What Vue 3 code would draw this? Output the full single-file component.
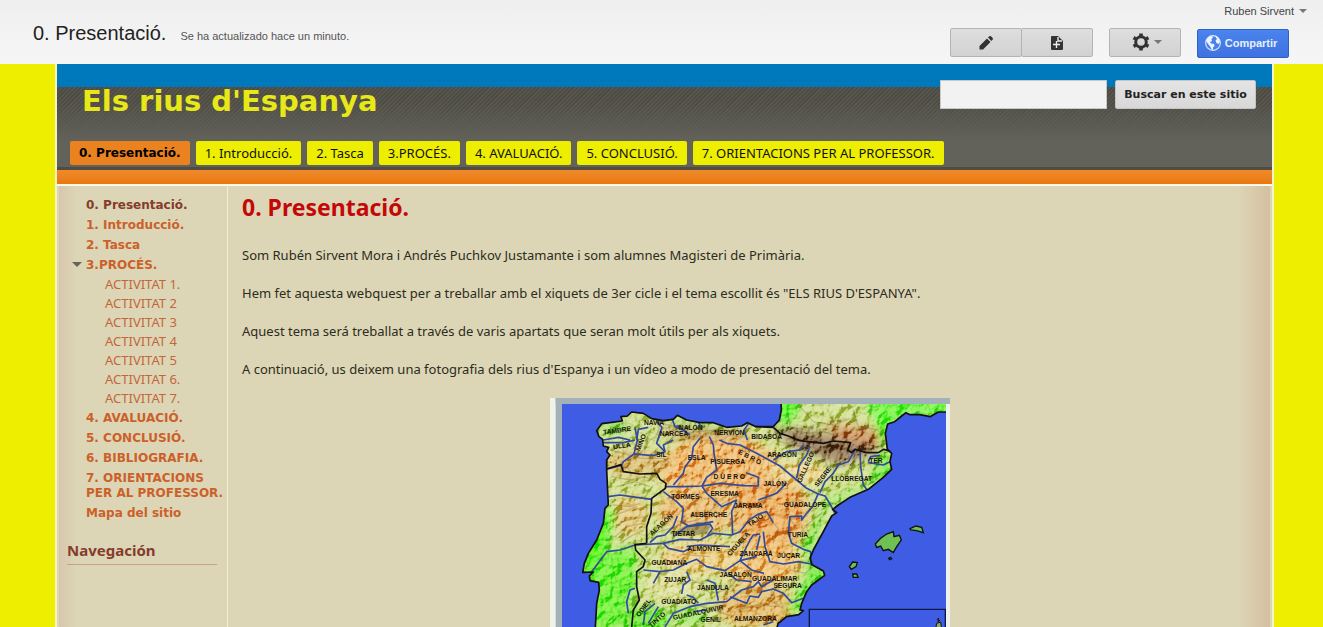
<script setup>
const tabs = [
  '0. Presentació.',
  '1. Introducció.',
  '2. Tasca',
  '3.PROCÉS.',
  '4. AVALUACIÓ.',
  '5. CONCLUSIÓ.',
  '7. ORIENTACIONS PER AL PROFESSOR.',
]

const pages = [
  { name: '0. Presentació.', current: true },
  { name: '1. Introducció.' },
  { name: '2. Tasca' },
  {
    name: '3.PROCÉS.',
    children: [
      'ACTIVITAT 1.',
      'ACTIVITAT 2',
      'ACTIVITAT 3',
      'ACTIVITAT 4',
      'ACTIVITAT 5',
      'ACTIVITAT 6.',
      'ACTIVITAT 7.',
    ],
  },
  { name: '4. AVALUACIÓ.' },
  { name: '5. CONCLUSIÓ.' },
  { name: '6. BIBLIOGRAFIA.' },
  { name: '7. ORIENTACIONS PER AL PROFESSOR.' },
  { name: 'Mapa del sitio' },
]

const paragraphs = [
  'Som Rubén Sirvent Mora i Andrés Puchkov Justamante i som alumnes Magisteri de Primària.',
  'Hem fet aquesta webquest per a treballar amb el xiquets de 3er cicle i el tema escollit és "ELS RIUS D\'ESPANYA".',
  'Aquest tema será treballat a través de varis apartats que seran molt útils per als xiquets.',
  "A continuació, us deixem una fotografia dels rius d'Espanya i un vídeo a modo de presentació del tema.",
]

const land =
  'M170 122L185 101L215 97L247 93L243 80L262 78L275 66L310 70L335 86L370 92L400 88L412 76L440 90L480 98L520 98L560 112L605 108L622 98L645 109L700 110L718 90L724 60L722 20H1240V66L1195 66L1170 80L1140 74L1110 74L1098 68L1085 78L1064 95L1043 102L1036 130L1042 178L1055 190L1050 215L1055 238L1030 262L985 298L930 322L895 345L878 358L890 368L875 378L850 425L820 480L810 505L816 524L850 543L854 556L815 585L800 605L785 640L780 660L790 662L776 674L740 680L715 700L705 730H165L170 640L178 600L176 577L150 572L148 558L160 546L128 547L133 520L145 490L170 450L190 400L195 355L205 345L200 240L200 210L210 195L200 185L206 172L190 168L188 148L177 140Z'

const rivers = [
  'M285 112L292 150L282 192L250 215L245 226L200 237',
  'M282 192L340 197L375 185L350 160L366 112L350 95',
  'M190 150L235 142L270 150M190 158L250 158L285 150',
  'M325 112L295 118L290 150M400 150L370 165L375 185',
  'M395 84L405 110L440 125M412 108L450 135M475 98L485 110',
  'M480 145L460 170L455 205L435 230L430 250L400 285',
  'M508 140L520 165L522 190L530 240L500 262L486 288',
  'M378 290L430 290L486 288L540 280L610 287L655 288L655 262L618 248',
  'M370 305L410 335L430 355L425 395L445 408L520 395',
  'M486 288L500 310L545 350L590 330L575 365L578 432',
  'M538 150L560 160L600 165L650 190L720 228L770 270L800 295L830 310L855 318L870 342L885 370',
  'M625 102L612 120L622 150',
  'M655 330L710 310L740 278M700 210L740 185L780 180L790 165',
  'M810 168L800 195L778 225L770 265',
  'M840 308L855 275L880 250L895 225L925 215L945 180',
  'M960 180L962 230L970 285L980 298M985 215L992 200L1020 196M985 218L1030 225L1050 215',
  'M835 310L818 350L800 370L785 390L785 378L750 380L745 430L755 460L790 478L812 485L814 520',
  'M700 398L680 365L655 372L625 392L600 425L575 435L520 430L480 450L420 448L370 460L285 465L240 480L200 485L155 545',
  'M330 458L350 440L375 435L400 410L412 378M370 460L385 475L430 485L450 475',
  'M400 440L440 410L510 402L518 415L500 440M440 470L480 465L570 470',
  'M660 432L640 435L630 450L605 500L600 512L635 540L672 550M660 437L650 480',
  'M670 425L675 470L690 515L730 522L775 515L814 522',
  'M310 540L360 545L400 540L440 520L470 508L500 530L555 542L600 512L650 500',
  'M360 545L340 580M440 545L450 570L430 585L425 612',
  'M375 711L400 670L450 650L500 640L560 635L605 600L640 590L655 575L665 590L700 570',
  'M500 570L525 580L535 632M440 615L460 622L475 640M565 550L590 570L635 575',
  'M570 620L620 640L630 618L655 622L665 605L700 597L730 610L755 638L790 625',
  'M310 705L315 665L345 640M325 700L355 650M460 665L500 660M670 705L700 695',
  'M205 320L240 315L290 322L335 328',
  'M265 670L260 635L270 600L285 595',
]

const border =
  'M200 237L243 224L250 245L300 252L350 250L360 268L378 280L376 295L335 325L333 370L320 410L320 460M320 460L285 464L287 480L315 510L310 530L290 545V590L298 630L280 660L275 711'
const pyrenees =
  'M645 110L700 112L720 130L745 138L780 152L850 160L880 153L932 158L923 180L935 188L945 178L980 188L1015 188L1030 178L1048 182'

const ridges = [
  'M210 180L250 190L300 205L370 205L390 220M290 200L315 175L330 150L350 140',
  'M215 260L270 270L315 260L345 275M230 290L285 275L330 290M220 345L270 350L300 340',
  'M220 375L255 365L290 350M230 405L260 390L315 380M225 440L260 410L310 400M240 460L270 440L310 420',
  'M340 80L380 105L430 110L470 125L530 120L600 125M360 105L350 135L395 130',
  'M340 430L390 415L430 398L475 390L520 355L570 330L600 310',
  'M650 340L685 325L720 300L740 295M730 340L780 330L810 350M690 390L715 415L700 460',
  'M745 340L735 365L770 415L735 425M780 430L800 405L850 365M750 540L795 550L820 530',
  'M680 125L720 155L760 165L830 175L890 180M790 190L780 225M845 190L860 225M895 185L880 240',
  'M745 70L750 110L800 130L850 125L900 140M780 50L820 95L880 105L930 85M940 60L955 110L1015 120',
  'M360 500L400 520L450 495L510 500M430 560L480 580L510 610L560 600L610 550',
  'M430 630L520 660L580 680M590 660L650 645L720 650M710 590L690 630L730 655',
]

const labels = [
  ['TAMBRE', 232, 128, -8], ['NAVIA', 342, 106, 0], ['NALÓN', 452, 120, 0],
  ['NARCEA', 402, 138, 0], ['ULLA', 247, 174, -8], ['MIÑO', 309, 160, -68],
  ['SIL', 364, 201, 0], ['NERVIÓN', 568, 135, 0], ['BIDASOA', 680, 148, 0],
  ['ESLA', 470, 210, 0], ['PISUERGA', 563, 221, 0], ['EBRO', 627, 207, 28, 'open'],
  ['DUERO', 568, 266, 0, 'open'], ['ERESMA', 554, 317, 0], ['TORMES', 436, 328, 0],
  ['JARAMA', 625, 354, 0], ['ALBERCHE', 506, 380, 0], ['ALAGÓN', 368, 409, -42],
  ['TIETAR', 430, 438, 0], ['TAJO', 650, 396, -35], ['CIGÜELA', 600, 466, -48],
  ['ALMONTE', 492, 482, 0], ['ZANCARA', 648, 498, 0], ['GUADIANA', 388, 525, 0],
  ['ZUJAR', 406, 575, 0], ['JABALÓN', 587, 561, 0], ['JÁNDULA', 519, 599, 0],
  ['GUADIATO', 416, 641, 0], ['GUADALQUIVIR', 476, 674, -12], ['GENIL', 512, 696, 0],
  ['ODIEL', 316, 657, -54], ['TINTO', 356, 694, -42], ['ALMANZORA', 646, 694, 0],
  ['ARAGÓN', 726, 201, 0], ['GALLEGO', 803, 235, -66], ['SEGRE', 854, 264, -52],
  ['TER', 1008, 218, 0], ['LLOBREGAT', 935, 274, 0], ['JALÓN', 704, 289, 0],
  ['GUADALOPE', 795, 352, 0], ['TURIA', 774, 442, 0], ['JUCAR', 746, 505, 0],
  ['GUADALIMAR', 704, 574, 0], ['SEGURA', 743, 595, 0],
]
</script>

<template>
  <div class="page">
    <header class="topbar">
      <div class="heading">
        <span class="doc">0. Presentació.</span>
        <span class="status">Se ha actualizado hace un minuto.</span>
      </div>
      <div class="tools">
        <button class="user" type="button">Ruben Sirvent <i class="caret"></i></button>
        <div class="actions">
          <div class="pair">
            <button class="tool" type="button" aria-label="Editar página">
              <svg width="16" height="16" viewBox="0 0 16 16"><path d="M1.500 11L9 3.500L12.500 7L5 14.500H1.500ZM10 2.600L11.300 1.300Q12.200 .6 13 1.300L14.700 3Q15.300 3.800 14.700 4.600L13.400 6Z" fill="#333" /></svg>
            </button>
            <button class="tool" type="button" aria-label="Nueva página">
              <svg width="16" height="16" viewBox="0 0 16 16"><path d="M2 2Q2 1 3 1H9L14 6V14Q14 15 13 15H3Q2 15 2 14Z" fill="#333" /><path d="M9 2V6H13M7.500 6V13M4 9.500H11" stroke="#eee" stroke-width="1.400" fill="none" /></svg>
            </button>
          </div>
          <button class="tool gear" type="button" aria-label="Más acciones">
            <svg width="18" height="18" viewBox="0 0 18 18">
              <circle cx="9" cy="9" r="5.300" fill="none" stroke="#333" stroke-width="3" />
              <path d="M7.200 .5H10.800V4H7.200ZM7.200 14H10.800V17.500H7.200ZM.7 6.200L2.500 3L5 5L3.500 7.600ZM17.300 6.200L15.500 3L13 5L14.500 7.600ZM.7 11.800L2.500 15L5 13L3.500 10.400ZM17.300 11.800L15.500 15L13 13L14.500 10.400Z" fill="#333" />
            </svg>
            <i class="caret"></i>
          </button>
          <button class="share" type="button">
            <svg width="16" height="16" viewBox="0 0 16 16">
              <circle cx="8" cy="8" r="7.400" fill="#4a80e8" stroke="#dfe9ff" stroke-width="1.100" />
              <path d="M1 6Q2.500 1.500 7 1L8 2.500L6.500 4L7 6L5 7L6 8.500L9 9L9.500 11L8 12.500L8 15Q6 14.500 5.500 12L3.500 9.500ZM10 1Q14 2 15 7L13.500 9L11.500 8L10.500 5.500L12 4Z" fill="#edf3ff" />
            </svg>
            Compartir
          </button>
        </div>
      </div>
    </header>

    <div class="site">
      <div class="banner">
        <div class="masthead">
          <h1><a href="#">Els rius d'Espanya</a></h1>
          <form class="search" @submit.prevent>
            <input type="text" aria-label="Buscar en este sitio" />
            <button type="submit">Buscar en este sitio</button>
          </form>
        </div>
        <nav class="tabs">
          <a v-for="(tab, i) in tabs" :key="tab" href="#" :class="{ active: i === 0 }">{{ tab }}</a>
        </nav>
      </div>
      <div class="stripe"></div>

      <div class="body">
        <aside>
          <ul class="tree">
            <li v-for="p in pages" :key="p.name">
              <i v-if="p.children" class="twisty"></i>
              <a href="#" class="node" :class="{ current: p.current }">{{ p.name }}</a>
              <ul v-if="p.children" class="sub">
                <li v-for="c in p.children" :key="c"><a href="#">{{ c }}</a></li>
              </ul>
            </li>
          </ul>
          <h2>Navegación</h2>
        </aside>

        <main>
          <h2 class="title">0. Presentació.</h2>
          <p v-for="t in paragraphs" :key="t">{{ t }}</p>
          <svg class="map" viewBox="30 24 1200 687" role="img" aria-label="Rius d'Espanya">
            <defs>
              <clipPath id="land"><path :d="land" /></clipPath>
              <clipPath id="sheet"><rect x="66" y="42" width="1152" height="669" /></clipPath>
              <filter id="soft" x="-20%" y="-20%" width="140%" height="140%"><feGaussianBlur stdDeviation="14" /></filter>
              <filter id="relief" x="0" y="0" width="100%" height="100%">
                <feTurbulence type="fractalNoise" baseFrequency="0.035" numOctaves="4" seed="7" />
                <feDiffuseLighting surfaceScale="24" lighting-color="#fff">
                  <feDistantLight azimuth="225" elevation="42" />
                </feDiffuseLighting>
              </filter>
            </defs>
            <rect x="30" y="24" width="1200" height="687" fill="#f1f1ec" />
            <rect x="47" y="24" width="1183" height="18" fill="#a4b1b8" />
            <rect x="47" y="24" width="19" height="687" fill="#a4b1b8" />
            <g clip-path="url(#sheet)">
              <rect x="66" y="42" width="1152" height="669" fill="#3e5ce4" />
              <g clip-path="url(#land)">
                <rect x="30" y="24" width="1200" height="720" fill="#bfd070" />
                <g filter="url(#soft)">
                  <ellipse cx="540" cy="240" rx="185" ry="100" fill="#e8a852" />
                  <ellipse cx="690" cy="370" rx="115" ry="120" fill="#e29a45" />
                  <ellipse cx="480" cy="360" rx="130" ry="70" fill="#deaa58" />
                  <ellipse cx="660" cy="520" rx="125" ry="65" fill="#e8b058" />
                  <ellipse cx="490" cy="500" rx="130" ry="50" fill="#e2bf68" />
                  <ellipse cx="650" cy="650" rx="120" ry="65" fill="#d6a44c" />
                  <ellipse cx="290" cy="220" rx="100" ry="40" fill="#cba752" />
                  <ellipse cx="270" cy="375" rx="55" ry="60" fill="#d6b964" />
                  <ellipse cx="400" cy="580" rx="80" ry="50" fill="#d2d482" />
                  <ellipse cx="770" cy="250" rx="90" ry="35" fill="#e2c878" />
                  <path d="M350 105L480 115L620 125L640 145L400 145Z" fill="#a5803e" />
                  <path d="M690 105L830 125L1025 160L1010 190L900 225L760 175Z" fill="#735536" />
                  <path d="M850 100L1030 115L1030 165L900 150Z" fill="#b8763e" />
                  <path d="M195 350L225 360L200 480L160 560L180 720H130V350Z" fill="#35f00f" />
                  <path d="M170 490L285 470L290 590L230 720H150Z" fill="#57ea22" />
                  <ellipse cx="310" cy="690" rx="80" ry="40" fill="#58e022" />
                  <ellipse cx="445" cy="680" rx="60" ry="25" fill="#7cda3f" />
                  <path d="M700 10H780L770 80L720 110Z" fill="#49f01d" />
                  <path d="M960 10H1240V80L1080 80L1030 175L1000 80Z" fill="#59ee2b" />
                  <path d="M1020 190L1060 190L1060 260L860 350L820 470L870 560L780 680L740 660L800 550L790 460L860 330L990 280Z" fill="#5de02c" />
                  <ellipse cx="220" cy="115" rx="45" ry="20" fill="#77ce45" />
                  <ellipse cx="500" cy="95" rx="110" ry="12" fill="#7fcd49" />
                </g>
                <rect class="shade" x="66" y="42" width="1152" height="680" filter="url(#relief)" />
                <path v-for="r in ridges" :key="r" :d="r" class="ridge" />
                <path d="M400 430L430 410L475 395L515 405L500 430L455 438Z" fill="#6a6738" opacity=".5" />
              </g>
              <path v-for="r in rivers" :key="r" :d="r" class="river" />
              <path :d="land" class="coast" />
              <path :d="border" class="coast" />
              <path :d="pyrenees" class="coast" />
              <path class="isle" d="M1006 462L1022 445L1040 432L1060 425L1062 440L1078 436L1084 450L1070 470L1060 488L1045 478L1030 482L1022 468L1010 472ZM1110 416L1128 408L1145 412L1150 428L1130 422L1112 420ZM928 530L938 516L952 518L948 530L934 538ZM938 552L950 552L954 562L940 562ZM1046 505L1052 502L1055 506L1049 509Z" />
              <path d="M808 720V658H1216V720" fill="none" stroke="#101848" stroke-width="4" />
              <path d="M1188 711L1190 700L1202 696L1204 711M1190 690L1196 684L1194 696L1200 690" fill="#8da869" stroke="#111" stroke-width="3" />
            </g>
            <text v-for="l in labels" :key="l[0]" :x="l[1]" :y="l[2]" :transform="`rotate(${l[3]} ${l[1]} ${l[2]})`">{{ l[4] ? l[0].split('').join(' ') : l[0] }}</text>
          </svg>
        </main>
      </div>
    </div>
  </div>
</template>

<style>
body {
  background: #eeee00;
}
</style>

<style scoped>
.page {
  min-height: 100vh;
  display: flex;
  flex-direction: column;
  font: 13px/19px "Noto Sans", sans-serif;
  color: #2c2c20;
}
a {
  color: inherit;
  text-decoration: none;
}
button {
  margin: 0;
  padding: 0;
  cursor: pointer;
}
.topbar {
  box-sizing: border-box;
  height: 64px;
  display: flex;
  justify-content: space-between;
  padding: 0 34px 0 33px;
  background: linear-gradient(#efefef, #f6f6f6);
  font-family: "Liberation Sans", Arial, sans-serif;
}
.heading {
  display: flex;
  align-items: baseline;
  gap: 14px;
  padding-top: 21px;
}
.doc {
  font-size: 20px;
  line-height: 24px;
  color: #222;
}
.status {
  font-size: 11px;
  color: #555;
}
.tools {
  display: flex;
  flex-direction: column;
  align-items: flex-end;
}
.user {
  display: flex;
  align-items: center;
  gap: 5px;
  margin-right: -18px;
  height: 22px;
  border: 0;
  background: none;
  font: 11px "Liberation Sans", Arial, sans-serif;
  color: #444;
}
.caret {
  border: 4px solid transparent;
  border-top-color: #777;
  border-bottom: 0;
}
.actions {
  display: flex;
  gap: 16px;
  padding-top: 6px;
}
.pair {
  display: flex;
}
.tool {
  box-sizing: border-box;
  width: 72px;
  height: 29px;
  display: flex;
  align-items: center;
  justify-content: center;
  gap: 4px;
  border: 1px solid #b4b4b4;
  border-radius: 2px;
  background: linear-gradient(#dedede, #d2d2d2);
}
.pair .tool + .tool {
  margin-left: -1px;
}
.gear {
  padding: 0 0 2px 4px;
}
.share {
  box-sizing: border-box;
  width: 92px;
  height: 29px;
  display: flex;
  align-items: center;
  justify-content: center;
  gap: 4px;
  margin-top: 1px;
  padding: 0 4px 2px 0;
  border: 1px solid #2f62c4;
  border-radius: 2px;
  background: linear-gradient(#4a84ee, #3f72e0);
  font: bold 11px "Liberation Sans", Arial, sans-serif;
  color: #e8f0ff;
}
.site {
  flex: 1;
  display: flex;
  flex-direction: column;
  margin: 0 49px 0 55px;
  border: solid #f4f2c8;
  border-width: 0 2px;
}
.banner {
  box-sizing: border-box;
  display: flex;
  flex-direction: column;
  justify-content: space-between;
  height: 106px;
  padding: 16px 16px 2px 13px;
  border-bottom: 3px solid #514b40;
  background:
    linear-gradient(#0079bc, #0079bc) 0 0 / 100% 23px no-repeat,
    linear-gradient(rgba(98, 96, 88, 0) 35%, #62615a 75%),
    repeating-linear-gradient(135deg, #4c4b43 0 1px, #58564d 2px 3px);
}
.masthead {
  display: flex;
  justify-content: space-between;
}
h1 {
  margin: 0 0 0 12px;
  font: bold 29px/42px "DejaVu Sans", sans-serif;
  color: #e8e818;
}
.search {
  display: flex;
  gap: 8px;
}
.search input {
  box-sizing: border-box;
  width: 167px;
  height: 29px;
  border: 1px solid #c8c8c8;
  background: #f2f2f2;
}
.search button {
  box-sizing: border-box;
  width: 141px;
  height: 29px;
  border: 1px solid #c4c4c4;
  border-radius: 2px;
  background: linear-gradient(#e4e4e4, #d8d8d8);
  font: bold 11px "DejaVu Sans", sans-serif;
  color: #222;
}
.tabs {
  display: flex;
  gap: 6px;
  white-space: nowrap;
}
.tabs a {
  padding: 0 9px;
  border-radius: 2px;
  background: #eeee00;
  line-height: 24px;
  color: #111;
}
.tabs .active {
  background: #ea8220;
  font-family: "DejaVu Sans", sans-serif;
  font-size: 12px;
  font-weight: bold;
  color: #000;
}
.stripe {
  height: 14px;
  border-bottom: 2px solid #fdf9e6;
  background: linear-gradient(#f08a2c, #e87810);
}
.body {
  flex: 1;
  display: flex;
  background:
    linear-gradient(90deg, #d8c6ac, rgba(216, 198, 172, 0)) 2px 0 / 18px 100% no-repeat,
    linear-gradient(270deg, #d5bf9f, rgba(213, 191, 159, 0)) right 2px top 0 / 32px 100% no-repeat,
    #dcd6b6;
}
aside {
  box-sizing: border-box;
  width: 171px;
  padding: 9px 10px 0;
  border-right: 1px solid #f2eed6;
}
ul {
  margin: 0;
  padding: 0;
  list-style: none;
}
.tree > li {
  position: relative;
  padding-left: 19px;
}
.node {
  display: block;
  margin-right: -10px;
  padding: 3px 0 2px;
  font: bold 12px/15px "DejaVu Sans", sans-serif;
  color: #cc602a;
}
.current {
  color: #853c2c;
}
.twisty {
  position: absolute;
  left: 5px;
  top: 7px;
  border: 5px solid transparent;
  border-top-color: #66645a;
  border-bottom: 0;
}
.sub {
  padding-left: 19px;
  color: #c4663c;
}
aside h2 {
  margin: 17px 0 0;
  padding-bottom: 4px;
  border-bottom: 1px solid #c9a283;
  font-size: 15px;
  line-height: 20px;
  color: #853c2c;
}
main {
  flex: 1;
  padding: 5px 14px 0;
}
.title {
  margin: 0 0 23px;
  font-size: 23px;
  line-height: 32px;
  color: #c40808;
}
p {
  margin: 0 0 19px;
}
.map {
  display: block;
  width: 400px;
  margin: 0 auto;
}
.shade {
  mix-blend-mode: soft-light;
}
.coast {
  fill: none;
  stroke: #111;
  stroke-width: 5;
  stroke-linejoin: round;
}
.river {
  fill: none;
  stroke: #334b9c;
  stroke-width: 5;
  stroke-linejoin: round;
}
.ridge {
  fill: none;
  stroke: #76602c;
  stroke-width: 4;
  opacity: 0.3;
}
.isle {
  fill: #70c154;
  stroke: #111;
  stroke-width: 4;
}
.map text {
  font: bold 20px "Liberation Sans", Arial, sans-serif;
  text-anchor: middle;
  fill: #181510;
}
</style>
